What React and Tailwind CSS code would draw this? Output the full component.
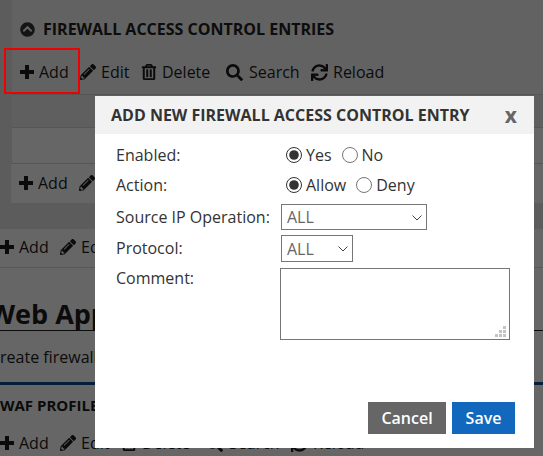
import { FaPencilAlt, FaRegTrashAlt, FaSearch, FaSync, FaChevronCircleUp } from "react-icons/fa";

function PlusIcon() {
  return (
    <svg width="14" height="14" viewBox="0 0 14 14" className="shrink-0" fill="currentColor">
      <path d="M5 0h4v5h5v4H9v5H5V9H0V5h5z" />
    </svg>
  );
}

function Toolbar({ full = true, className = "" }) {
  return (
    <div className={`flex items-center text-[16px] h-[20px] text-[#1c1c1c] ${className}`}>
      <span className="flex items-center gap-[5px] w-[60px]"><PlusIcon />Add</span>
      <span className="flex items-center gap-[5px] w-[61px]"><FaPencilAlt size={16} className="shrink-0" />Edit</span>
      {full && (
        <>
          <span className="flex items-center gap-[5px] w-[85px]"><FaRegTrashAlt size={16} stroke="currentColor" strokeWidth={16} />Delete</span>
          <span className="flex items-center gap-[6px] w-[85px]"><FaSearch size={17} />Search</span>
          <span className="flex items-center gap-[5px]"><FaSync size={17} />Reload</span>
        </>
      )}
    </div>
  );
}

function Page() {
  return (
    <div className="h-[456px] overflow-hidden bg-white text-[#1c1c1c]">
      <div className="h-[229px] bg-[#e6e6e6] pl-[12px]">
        <div className="bg-[#f5f5f5] h-[94px] pl-[8px] pt-[19px]">
          <div className="flex items-center gap-[8px] h-[20px]">
            <FaChevronCircleUp size={15} className="text-[#333]" />
            <span className="text-[16px] leading-[20px] font-bold text-[#222]">FIREWALL ACCESS CONTROL ENTRIES</span>
          </div>
          <Toolbar className="mt-[23px]" />
        </div>
        <div className="h-[33px] bg-[#eeeeee] border-t border-[#d8d8d8]" />
        <div className="h-[36px] bg-white border-t border-[#d8d8d8]" />
        <div className="h-[40px] bg-white border-t border-[#d8d8d8] pl-[8px] pt-[9px] -ml-[1px]">
          <Toolbar full={false} />
        </div>
      </div>
      <Toolbar className="mt-[8px]" />
      <div className="mt-[10px] border-t border-[#dcdcdc] h-[45px]" />
      <div className="h-[18px] relative">
        <div className="absolute -top-[16px] -left-[11px] text-[27px] leading-[36px] font-bold whitespace-nowrap">Web Application Firewall</div>
      </div>
      <div className="border-t border-[#222]" />
      <div className="text-[16px] leading-[22px] mt-[15px] -ml-[10px] h-[22px] whitespace-nowrap">Create firewall profiles</div>
      <div className="border-t-[3px] border-[#0b4f8f] mt-[14px]" />
      <div className="text-[15px] leading-[20px] font-bold mt-[10px] whitespace-nowrap">WAF PROFILES</div>
      <Toolbar className="mt-[18px]" />
    </div>
  );
}

function Field({ label, children, className = "", labelClass = "" }) {
  return (
    <div className={`flex ${className}`}>
      <div className={`w-[164px] shrink-0 text-[16px] leading-[20px] ${labelClass}`}>{label}</div>
      {children}
    </div>
  );
}

function Radio({ label, checked, name, className = "" }) {
  return (
    <label className={`flex items-center text-[16px] leading-[20px] ${className}`}>
      <input type="radio" name={name} defaultChecked={checked} className="m-0 w-[16px] h-[16px] mr-[4px] accent-[#333]" />
      {label}
    </label>
  );
}

function Select({ className = "" }) {
  return (
    <div className={`relative ml-[1px] ${className}`}>
      <select className="w-full h-full border border-[#767676] text-[16px] text-[#666] pl-[5px] bg-white appearance-none rounded-none">
        <option>ALL</option>
      </select>
      <svg width="10" height="6" viewBox="0 0 10 6" className="absolute right-[5px] top-[11px] pointer-events-none" fill="none" stroke="#444" strokeWidth="1">
        <path d="M.5.5 5 5 9.5.5" />
      </svg>
    </div>
  );
}

function Dialog() {
  return (
    <div className="absolute left-[95px] top-[96px] w-[439px] h-[352px] bg-white flex flex-col text-[#333]">
      <div className="h-[38px] shrink-0 bg-[#f2f2f2] flex items-center justify-between pl-[16px] pr-[17px]">
        <span className="text-[16px] font-bold leading-[20px]">ADD NEW FIREWALL ACCESS CONTROL ENTRY</span>
        <span className="text-[21px] font-bold leading-[20px] text-[#666]">x</span>
      </div>
      <div className="pl-[21px] pt-[11px] flex-1">
        <Field label="Enabled:" className="h-[20px]">
          <div className="flex pl-[6px]">
            <Radio label="Yes" name="enabled" checked />
            <Radio label="No" name="enabled" className="ml-[10px]" />
          </div>
        </Field>
        <Field label="Action:" className="h-[20px] mt-[10px]">
          <div className="flex pl-[6px]">
            <Radio label="Allow" name="action" checked />
            <Radio label="Deny" name="action" className="ml-[10px]" />
          </div>
        </Field>
        <Field label="Source IP Operation:" className="h-[26px] mt-[9px] items-center">
          <Select className="w-[146px] h-[26px]" />
        </Field>
        <Field label="Protocol:" labelClass="pt-[3px]" className="h-[27px] mt-[5px] items-start">
          <Select className="w-[72px] h-[27px]" />
        </Field>
        <Field label="Comment:" className="mt-[6px]">
          <div className="relative w-[230px] h-[72px]">
            <textarea className="block w-full h-full border border-[#767676] bg-white resize-none" />
            <svg width="11" height="11" viewBox="0 0 11 11" className="absolute right-[4px] bottom-[3px]" fill="#c4c4c4">
              <path d="M8 0h3v3H8zM4 4h3v3H4zM8 4h3v3H8zM0 8h3v3H0zM4 8h3v3H4zM8 8h3v3H8z" />
            </svg>
          </div>
        </Field>
      </div>
      <div className="flex justify-end gap-[6px] pr-[19px] pb-[14px]">
        <button className="w-[78px] h-[32px] bg-[#666] text-white text-[16px] font-semibold">Cancel</button>
        <button className="w-[63px] h-[32px] bg-[#1268bd] text-white text-[16px] font-semibold">Save</button>
      </div>
    </div>
  );
}

export default function App() {
  return (
    <div className="relative w-[543px] h-[456px] overflow-hidden font-['Open_Sans',sans-serif]">
      <Page />
      <div className="absolute inset-0 bg-black/60" />
      <div className="absolute left-[4px] top-[48px] w-[76px] h-[46px] border-[2px] border-[#f00000]" />
      <Dialog />
    </div>
  );
}
